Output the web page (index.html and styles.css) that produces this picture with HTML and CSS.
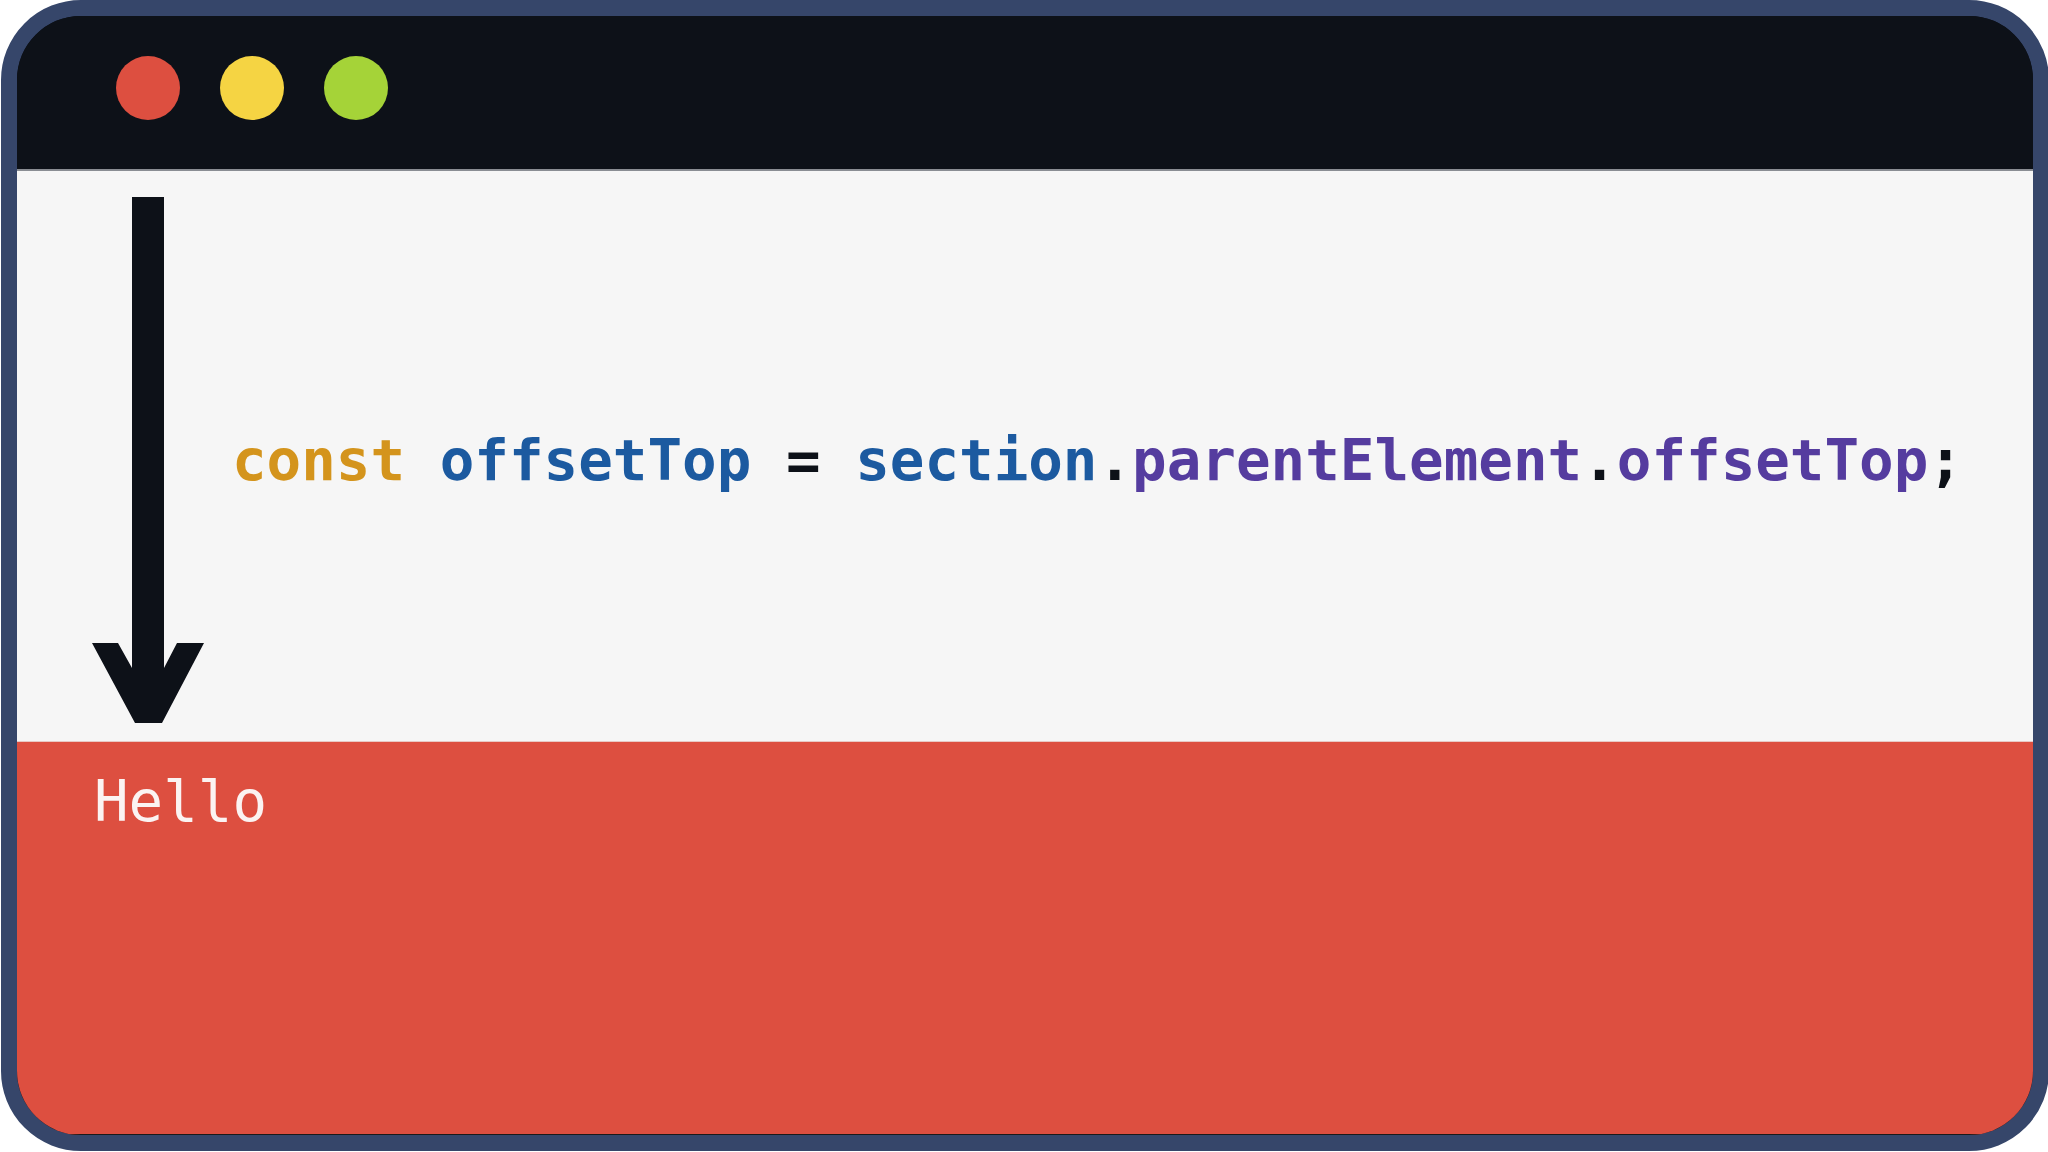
FILE: index.html
```html
<!DOCTYPE html>
<html lang="en">
<head>
<meta charset="utf-8">
<title>offsetTop</title>
<link rel="stylesheet" href="styles.css">
</head>
<body>
<div class="window">
  <div class="titlebar">
    <span class="dot dot-red"></span>
    <span class="dot dot-yellow"></span>
    <span class="dot dot-green"></span>
  </div>
  <div class="parent">
    <svg class="arrow" width="112" height="526" viewBox="92 197 112 526" aria-hidden="true">
      <polygon points="132,197 164,197 164,668 177,643 204,643 162,723 135,723 92,643 118,643 132,668" fill="#0d1118"/>
    </svg>
    <code class="code"><span class="kw">const</span> <span class="var">offsetTop</span> <span class="pun">=</span> <span class="var">section</span><span class="pun">.</span><span class="prop">parentElement</span><span class="pun">.</span><span class="prop">offsetTop</span><span class="pun">;</span></code>
  </div>
  <div class="section">
    <span class="hello">Hello</span>
  </div>
</div>
</body>
</html>
```

FILE: styles.css
```css
html, body {
  margin: 0;
  padding: 0;
  background: #ffffff;
  overflow: hidden;
  width: 2048px;
  height: 1152px;
}

.window {
  box-sizing: border-box;
  width: 2048px;
  height: 1151px;
  margin-left: 1px;
  border: 16px solid #36466a;
  border-radius: 80px;
  overflow: hidden;
  display: flex;
  flex-direction: column;
  background: #0d1118;
}

.titlebar {
  height: 155px;
  flex: 0 0 auto;
  box-sizing: border-box;
  padding: 40px 0 0 99px;
  display: flex;
  align-items: flex-start;
  gap: 40px;
  background: #0d1118;
  border-bottom: 2px solid #8a8d93;
}

.dot {
  width: 64px;
  height: 64px;
  border-radius: 50%;
  display: block;
}
.dot-red { background: #dd4f40; }
.dot-yellow { background: #f5d443; }
.dot-green { background: #a5d338; }

.parent {
  height: 571px;
  flex: 0 0 auto;
  background: #f6f6f6;
  display: flex;
  align-items: flex-start;
  border-bottom: 1px solid #e8c9c4;
  box-sizing: border-box;
}

.arrow {
  display: block;
  margin: 26px 0 0 75px;
  flex: 0 0 auto;
}

.code {
  display: block;
  margin: 261px 0 0 28px;
  font-family: "DejaVu Sans Mono", "Liberation Mono", monospace;
  font-weight: 700;
  font-size: 57.5px;
  line-height: 1;
  white-space: pre;
  color: #0d1118;
}

.kw { color: #d4941c; }
.var { color: #1c5aa0; }
.prop { color: #553c9f; }
.pun { color: #0d1118; }

.section {
  flex: 1 1 auto;
  background: #dd4f40;
  box-sizing: border-box;
  padding: 31px 0 0 77px;
  border-bottom: 1px solid #1a1a1a;
}

.hello {
  display: block;
  font-family: "DejaVu Sans Mono", "Liberation Mono", monospace;
  font-weight: 400;
  font-size: 57.5px;
  line-height: 1;
  color: #fbf3f2;
  white-space: pre;
}
```
